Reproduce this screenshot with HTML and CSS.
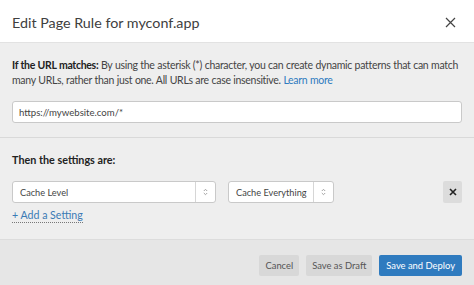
FILE: index.html
```html
<!DOCTYPE html>
<html lang="en">

<head>
    <meta charset="UTF-8">
    <meta name="viewport" content="width=device-width, initial-scale=1.0">
    <title>Edit Page Rule</title>
    <link rel="stylesheet" href="styles.css">
</head>

<body>
    <div class="modal">
        <div class="header">
            <h1>Edit Page Rule for myconf.app</h1>
            <span class="close"><svg width="11" height="11" viewBox="0 0 11 11"><path d="M1 1 L10 10 M10 1 L1 10" stroke="#444" stroke-width="1.2"/></svg></span>
        </div>
        <div class="section">
            <p class="intro"><b>If the URL matches:</b> By using the asterisk (*) character, you can create dynamic patterns that can match many URLs, rather than just one. All URLs are case insensitive. <a href="#">Learn more</a></p>
            <input type="text" class="url" value="https://mywebsite.com/*">
        </div>
        <div class="section settings">
            <p class="label"><b>Then the settings are:</b></p>
            <div class="row">
                <div class="select wide">
                    <span>Cache Level</span>
                    <span class="arrows"><svg width="5" height="8" viewBox="0 0 5 8"><path d="M0.8 3 L2.5 1.3 L4.2 3 M0.8 5 L2.5 6.7 L4.2 5" fill="none" stroke="#999" stroke-width="0.9"/></svg></span>
                </div>
                <div class="select narrow">
                    <span>Cache Everything</span>
                    <span class="arrows"><svg width="5" height="8" viewBox="0 0 5 8"><path d="M0.8 3 L2.5 1.3 L4.2 3 M0.8 5 L2.5 6.7 L4.2 5" fill="none" stroke="#999" stroke-width="0.9"/></svg></span>
                </div>
                <span class="remove"><svg width="8" height="8" viewBox="0 0 8 8"><path d="M1 1 L7 7 M7 1 L1 7" stroke="#222" stroke-width="1.6"/></svg></span>
            </div>
            <a href="#" class="add">+ Add a Setting</a>
        </div>
        <div class="footer">
            <button class="btn">Cancel</button>
            <button class="btn">Save as Draft</button>
            <button class="btn primary">Save and Deploy</button>
        </div>
    </div>
</body>

</html>
```

FILE: styles.css
```css
* {
    margin: 0;
    padding: 0;
    box-sizing: border-box;
}

body {
    font-family: Lato, "Open Sans", sans-serif;
    background-color: #eeeeee;
    color: #333;
    width: 474px;
    height: 285px;
    overflow: hidden;
}

.modal {
    display: flex;
    flex-direction: column;
    height: 285px;
}

.header {
    background-color: #fff;
    height: 43px;
    padding: 0 12px;
    display: flex;
    align-items: center;
    justify-content: space-between;
    border-bottom: 1px solid #e2e2e2;
}

h1 {
    font-size: 14.3px;
    font-weight: normal;
    color: #404040;
    padding-top: 3px;
}

.close {
    display: flex;
    margin-right: 6px;
    padding-top: 2px;
}

.section {
    padding: 15px 12px 14px;
    border-bottom: 1px solid #d9d9d9;
}

.intro {
    font-size: 10.5px;
    line-height: 15px;
    letter-spacing: -0.3px;
    word-spacing: 0.3px;
    color: #444;
}

.intro b {
    color: #222;
}

.intro a {
    color: #2f7bbf;
    text-decoration: none;
}

.url {
    display: block;
    width: 100%;
    height: 22px;
    margin-top: 13px;
    border: 1px solid #c9c9c9;
    border-radius: 3px;
    padding: 0 6px;
    font-family: inherit;
    font-size: 9.6px;
    color: #444;
}

.settings {
    flex: 1;
    padding-top: 15px;
    border-bottom: 1px solid #dcdcdc;
}

.label {
    font-size: 10.8px;
    color: #222;
}

.row {
    display: flex;
    align-items: center;
    margin-top: 15px;
    height: 22px;
}

.select {
    display: flex;
    height: 22px;
    background: #fff;
    border: 1px solid #c9c9c9;
    border-radius: 3px;
    font-size: 9.2px;
    color: #444;
    align-items: center;
}

.select span:first-child {
    flex: 1;
    padding-left: 7px;
}

.arrows {
    width: 20px;
    height: 100%;
    border-left: 1px solid #d6d6d6;
    display: flex;
    align-items: center;
    justify-content: center;
}

.wide {
    width: 204px;
}

.narrow {
    width: 106px;
    margin-left: 12px;
}

.remove {
    margin-left: auto;
    width: 19px;
    height: 22px;
    background: #dcdcdc;
    border-radius: 2px;
    display: flex;
    align-items: center;
    justify-content: center;
}

.add {
    display: inline-block;
    margin-top: 6px;
    font-size: 10.6px;
    color: #3a7ab5;
    text-decoration: none;
    border-bottom: 1px dotted #777;
    padding-bottom: 1px;
}

.footer {
    background-color: #e6e6e6;
    height: 45px;
    display: flex;
    align-items: flex-start;
    justify-content: flex-end;
    gap: 7px;
    padding: 15px 12px 0;
}

.btn {
    height: 21px;
    padding: 0 6px;
    border: none;
    border-radius: 2px;
    background-color: #d8d8d8;
    font-family: inherit;
    font-size: 9.4px;
    color: #555;
}

.primary {
    background-color: #2f7bbf;
    color: #fff;
    padding: 0 7px;
}
```
